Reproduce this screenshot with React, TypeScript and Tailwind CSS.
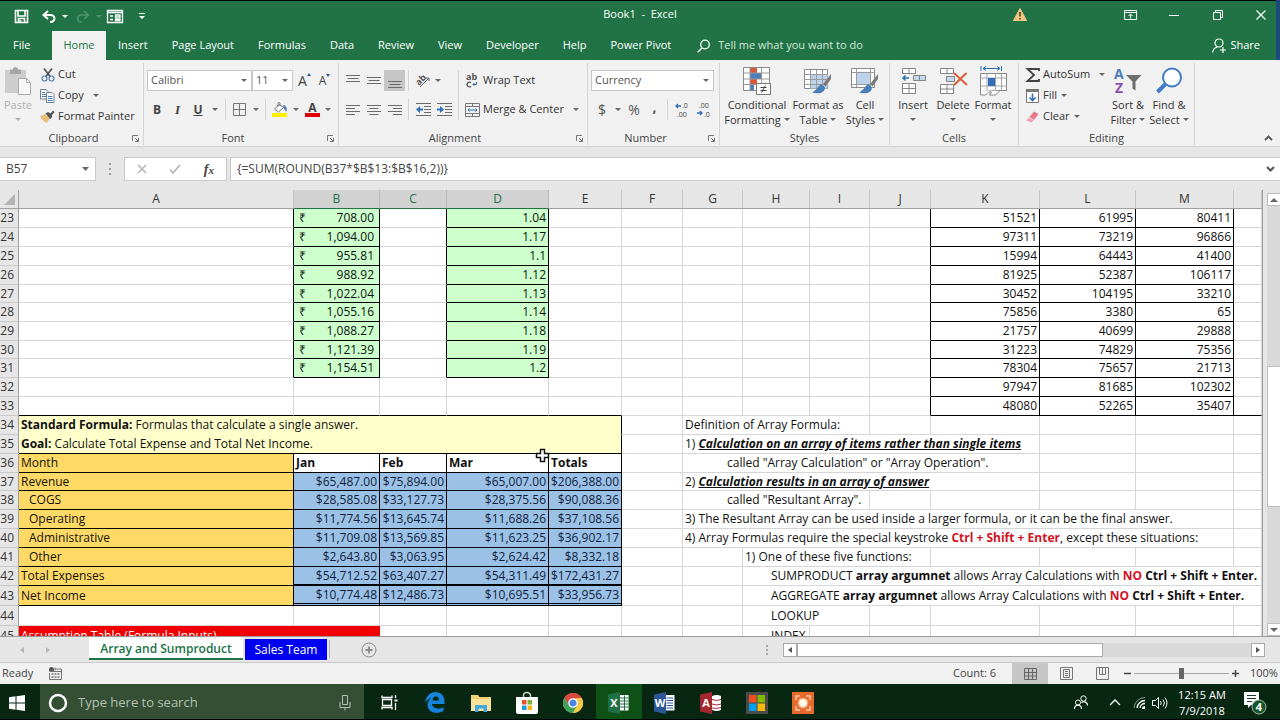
import type { ReactNode } from "react";
import { clsx } from "clsx";

const TABS = [
  "Insert",
  "Page Layout",
  "Formulas",
  "Data",
  "Review",
  "View",
  "Developer",
  "Help",
  "Power Pivot",
];

type Cell = {
  value?: ReactNode;
  className: string;
  span?: number;
};

type Row = {
  number: number;
  height: string;
  cells: Cell[];
};

const COLUMNS = [
  { name: "A", width: "w-[275px]" },
  { name: "B", width: "w-[86px]", selected: true },
  { name: "C", width: "w-[67px]", selected: true },
  { name: "D", width: "w-[102px]", selected: true },
  { name: "E", width: "w-[73px]" },
  { name: "F", width: "w-[61px]" },
  { name: "G", width: "w-[60px]" },
  { name: "H", width: "w-[67px]" },
  { name: "I", width: "w-[60px]" },
  { name: "J", width: "w-[61px]" },
  { name: "K", width: "w-[109px]" },
  { name: "L", width: "w-[96px]" },
  { name: "M", width: "w-[98px]" },
  { name: "", width: "w-auto" },
];

// border presets: right side / bottom side
const PLAIN = "border-[#d6d6d6]";
const RIGHT = "border-r-black border-b-[#d6d6d6]";
const BOTTOM = "border-r-[#d6d6d6] border-b-black";
const BOX = "border-black";

const GREEN = `${BOX} bg-[#ccffcc]`;
const GOLD = `${BOX} bg-[#ffd966]`;
const BLUE = `${BOX} bg-[#9bc2e6] text-right text-[#101c3c]`;
const YELLOW = "bg-[#ffffcc]";

const blank = (count: number, className = PLAIN): Cell[] =>
  Array.from({ length: count }, () => ({ className }));

const RATES: [string, string][] = [
  ["708.00", "1.04"],
  ["1,094.00", "1.17"],
  ["955.81", "1.1"],
  ["988.92", "1.12"],
  ["1,022.04", "1.13"],
  ["1,055.16", "1.14"],
  ["1,088.27", "1.18"],
  ["1,121.39", "1.19"],
  ["1,154.51", "1.2"],
];

const SAMPLES = [
  [51521, 61995, 80411],
  [97311, 73219, 96866],
  [15994, 64443, 41400],
  [81925, 52387, 106117],
  [30452, 104195, 33210],
  [75856, 3380, 65],
  [21757, 40699, 29888],
  [31223, 74829, 75356],
  [78304, 75657, 21713],
  [97947, 81685, 102302],
  [48080, 52265, 35407],
];

const UPPER_ROWS: Row[] = SAMPLES.map((sample, i) => {
  const rate = RATES[i];
  const last = i === SAMPLES.length - 1;
  const left: Cell[] = rate
    ? [
        { className: RIGHT },
        {
          className: GREEN,
          value: (
            <span className="flex justify-between px-[3px]">
              <span>₹</span>
              <span>{rate[0]}</span>
            </span>
          ),
        },
        { className: RIGHT },
        { className: `${GREEN} text-right`, value: rate[1] },
        { className: PLAIN },
      ]
    : blank(5, last ? BOTTOM : PLAIN);

  return {
    number: 23 + i,
    height: [4, 7].includes(i) ? "h-[18px]" : "h-[19px]",
    cells: [
      ...left,
      ...blank(4),
      { className: RIGHT },
      ...sample.map((n) => ({ className: `${BOX} text-right`, value: n })),
      { className: last ? BOTTOM : PLAIN },
    ],
  };
});

const MONEY: [string, string, string, string, string][] = [
  ["Revenue", "$65,487.00", "$75,894.00", "$65,007.00", "$206,388.00"],
  ["COGS", "$28,585.08", "$33,127.73", "$28,375.56", "$90,088.36"],
  ["Operating", "$11,774.56", "$13,645.74", "$11,688.26", "$37,108.56"],
  ["Administrative", "$11,709.08", "$13,569.85", "$11,623.25", "$36,902.17"],
  ["Other", "$2,643.80", "$3,063.95", "$2,624.42", "$8,332.18"],
  ["Total Expenses", "$54,712.52", "$63,407.27", "$54,311.49", "$172,431.27"],
  ["Net Income", "$10,774.48", "$12,486.73", "$10,695.51", "$33,956.73"],
];

const Red = ({ children }: { children: ReactNode }) => (
  <b className="text-[#d3121f]">{children}</b>
);

// everything right of column E in rows 37-43
const NOTES: Cell[][] = [
  [
    ...blank(1),
    {
      span: 5,
      className: PLAIN,
      value: (
        <>
          2) <b className="italic underline">Calculation results in an array of answer</b>
        </>
      ),
    },
    ...blank(3),
  ],
  [
    ...blank(1),
    { span: 3, className: PLAIN, value: <span className="pl-[42px]">called "Resultant Array".</span> },
    ...blank(5),
  ],
  [
    ...blank(1),
    {
      span: 7,
      className: PLAIN,
      value: "3) The Resultant Array can be used inside a larger formula, or it can be the final answer.",
    },
    ...blank(1),
  ],
  [
    ...blank(1),
    {
      span: 7,
      className: PLAIN,
      value: (
        <>
          4) Array Formulas require the special keystroke <Red>Ctrl + Shift + Enter</Red>, except these
          situations:
        </>
      ),
    },
    ...blank(1),
  ],
  [...blank(2), { span: 3, className: PLAIN, value: "1) One of these five functions:" }, ...blank(4)],
  [
    ...blank(2),
    {
      span: 7,
      className: PLAIN,
      value: (
        <span className="pl-[26px]">
          SUMPRODUCT <b>array argumnet</b> allows Array Calculations with <Red>NO</Red>{" "}
          <b>Ctrl + Shift + Enter.</b>
        </span>
      ),
    },
  ],
  [
    ...blank(2),
    {
      span: 7,
      className: PLAIN,
      value: (
        <span className="pl-[26px]">
          AGGREGATE <b>array argumnet</b> allows Array Calculations with <Red>NO</Red>{" "}
          <b>Ctrl + Shift + Enter.</b>
        </span>
      ),
    },
  ],
];

const MONEY_ROWS: Row[] = MONEY.map(([label, ...amounts], i) => ({
  number: 37 + i,
  height: i === 0 ? "h-[18px]" : i > 5 ? "h-[20px]" : "h-[19px]",
  cells: [
    {
      className: GOLD,
      value: <span className={i > 0 && i < 5 ? "pl-2" : undefined}>{label}</span>,
    },
    ...amounts.map((value) => ({
      className: clsx(BLUE, i === 5 && "border-b-2", i === 6 && "border-b-[3px] [border-bottom-style:double]"),
      value,
    })),
    ...NOTES[i],
  ],
}));

const ROWS: Row[] = [
  ...UPPER_ROWS,
  {
    number: 34,
    height: "h-[19px]",
    cells: [
      {
        span: 5,
        className: `${YELLOW} border-r-black border-b-[#ffffcc]`,
        value: (
          <>
            <b>Standard Formula:</b> Formulas that calculate a single answer.
          </>
        ),
      },
      ...blank(1),
      { span: 3, className: PLAIN, value: "Definition of Array Formula:" },
      ...blank(5),
    ],
  },
  {
    number: 35,
    height: "h-[19px]",
    cells: [
      {
        span: 5,
        className: `${YELLOW} ${BOX}`,
        value: (
          <>
            <b>Goal:</b> Calculate Total Expense and Total Net Income.
          </>
        ),
      },
      ...blank(1),
      {
        span: 5,
        className: PLAIN,
        value: (
          <>
            1) <b className="italic underline">Calculation on an array of items rather than single items</b>
          </>
        ),
      },
      ...blank(3),
    ],
  },
  {
    number: 36,
    height: "h-[19px]",
    cells: [
      { className: GOLD, value: "Month" },
      ...["Jan", "Feb", "Mar", "Totals"].map((value) => ({ className: `${BOX} font-bold`, value })),
      ...blank(1),
      {
        span: 5,
        className: PLAIN,
        value: <span className="pl-[42px]">called "Array Calculation" or "Array Operation".</span>,
      },
      ...blank(3),
    ],
  },
  ...MONEY_ROWS,
  {
    number: 44,
    height: "h-[20px]",
    cells: [
      ...blank(7),
      { span: 2, className: PLAIN, value: <span className="pl-[26px]">LOOKUP</span> },
      ...blank(5),
    ],
  },
  {
    number: 45,
    height: "h-[20px]",
    cells: [
      { span: 2, className: "border-[#f00000] bg-[#f00000] text-white", value: "Assumption Table (Formula Inputs)" },
      ...blank(5),
      { className: PLAIN, value: <span className="pl-[26px]">INDEX</span> },
      ...blank(6),
    ],
  },
];

function Caret({ className = "text-[#666]" }: { className?: string }) {
  return (
    <svg className={clsx("h-[3px] w-[6px] shrink-0", className)} viewBox="0 0 6 3" fill="currentColor">
      <path d="M0 0h6L3 3z" />
    </svg>
  );
}

function Svg({
  w,
  h,
  children,
  className,
}: {
  w: number;
  h: number;
  children: ReactNode;
  className?: string;
}) {
  return (
    <svg
      width={w}
      height={h}
      viewBox={`0 0 ${w} ${h}`}
      fill="none"
      stroke="currentColor"
      className={clsx("shrink-0 overflow-visible", className)}
      aria-hidden="true"
    >
      {children}
    </svg>
  );
}

function TitleBar() {
  return (
    <header className="flex h-[31px] shrink-0 items-center border-t border-black bg-[#217346] text-white">
      <div className="flex flex-1 items-center pl-[14px]">
        <button aria-label="Save" className="mr-[13px]">
          <Svg w={15} h={15}>
            <path d="M1.5 1.5h12v12h-12zM4 1.5V7h7V1.5M4.500 13.500v-4h6v4M6.500 13v-2" strokeWidth="1.600" />
          </Svg>
        </button>
        <button aria-label="Undo" className="flex items-center gap-[6px]">
          <Svg w={14} h={13}>
            <path d="M6 1 1.500 5 6 9M2 5h6.500a4 3.500 0 0 1 0 7H8" strokeWidth="2" />
          </Svg>
          <Caret className="text-white" />
        </button>
        <button aria-label="Redo" className="ml-[8px] flex items-center gap-[6px] text-[#4f9470]">
          <Svg w={14} h={13}>
            <path d="M8 1l4.500 4L8 9M12 5H5.500a4 3.500 0 0 0 0 7H6" strokeWidth="1.500" />
          </Svg>
          <Caret className="text-[#4f9470]" />
        </button>
        <button aria-label="Form" className="ml-[5px]">
          <Svg w={16} h={13}>
            <path d="M.500.500h15v12H.500zM.500 2.500h15M3 6h3M3 9.500h3M8.500 5h4.500v2H8.500zM8.500 9h4.500v1.500H8.500z" strokeWidth="1.300" />
          </Svg>
        </button>
        <button aria-label="Customize Quick Access Toolbar" className="ml-[16px]">
          <Svg w={6} h={7}>
            <path d="M0 .500h6" />
            <path d="M0 3h6L3 6z" fill="currentColor" stroke="none" />
          </Svg>
        </button>
      </div>
      <h1 className="pb-[3px] text-[11px] whitespace-pre">Book1  -  Excel</h1>
      <div className="flex flex-1 items-center justify-end pr-[10px] pb-[3px]">
        <Svg w={14} h={13} className="mr-[97px]">
          <path d="M7 .500 13.500 12.500H.500z" fill="#f3c782" stroke="#f3c782" />
          <path d="M7 4v4.500M7 10v1.500" stroke="#4a3210" strokeWidth="1.500" />
        </Svg>
        <button aria-label="Ribbon Display Options" className="mr-[32px]">
          <Svg w={13} h={10}>
            <path d="M.500.500h12v9H.500zM.500 2.500h12M6.500 8.500v-4M4.500 6l2-2 2 2" />
          </Svg>
        </button>
        <button aria-label="Minimize" className="mr-[34px]">
          <Svg w={10} h={10}>
            <path d="M0 5.500h10" />
          </Svg>
        </button>
        <button aria-label="Restore Down" className="mr-[33px]">
          <Svg w={10} h={10}>
            <path d="M.500 2.500h7v7h-7zM2.500 2.500v-2h7v7h-2" />
          </Svg>
        </button>
        <button aria-label="Close">
          <Svg w={10} h={10}>
            <path d="M.500.500l9 9M9.500.500l-9 9" strokeWidth="1.200" />
          </Svg>
        </button>
      </div>
    </header>
  );
}

function TabStrip() {
  return (
    <nav className="flex h-[29px] shrink-0 items-center bg-[#217346] text-[11px] text-white">
      <button className="w-[52px] pl-[13px] text-left">File</button>
      <button className="h-[29px] w-[54px] bg-[#f1f1f1] text-[#217346]">Home</button>
      {TABS.map((tab) => (
        <button key={tab} className="px-[12px]">
          {tab}
        </button>
      ))}
      <label className="ml-[14px] flex flex-1 items-center gap-[8px]">
        <Svg w={13} h={14}>
          <circle cx="8" cy="5.500" r="4.300" strokeWidth="1.300" />
          <path d="M5 9 .700 13.300" strokeWidth="1.300" />
        </Svg>
        <input
          aria-label="Tell me what you want to do"
          placeholder="Tell me what you want to do"
          className="w-[180px] bg-transparent outline-none placeholder:text-[#d5e8dc]"
        />
      </label>
      <button className="mr-[16px] flex items-center gap-[4px]">
        <Svg w={14} h={15}>
          <circle cx="7" cy="5" r="4" strokeWidth="1.200" />
          <path d="M.700 14.500C1 11.500 3 9.500 5.500 9M11 9v6M8 12h6" strokeWidth="1.200" />
        </Svg>
        Share
      </button>
    </nav>
  );
}

function Group({
  label,
  width,
  launcher,
  labelClass,
  children,
}: {
  label: string;
  width: string;
  launcher?: boolean;
  labelClass?: string;
  children: ReactNode;
}) {
  return (
    <section className={clsx("flex shrink-0 flex-col border-r border-[#d4d4d4]", width)}>
      <div className="flex flex-1">{children}</div>
      <div className="flex h-[14px] items-center text-[11px] leading-[14px] text-[#444]">
        <span className={clsx("flex-1 text-center", labelClass)}>{label}</span>
        {launcher ? (
          <button aria-label={`${label} settings`} className="flex w-[16px] justify-center text-[#777]">
            <Svg w={7} h={7}>
              <path d="M.500 6V.500H6M3 3l3 3M6.500 3v3.500H3" />
            </Svg>
          </button>
        ) : null}
      </div>
    </section>
  );
}

const Divider = ({ className = "h-[21px]" }: { className?: string }) => (
  <span className={clsx("mx-[3px] w-px shrink-0 bg-[#d4d4d4]", className)} />
);

function SmallButton({ icon, label, caret }: { icon: ReactNode; label: string; caret?: string }) {
  return (
    <button className="flex h-[21px] items-center text-[11px] whitespace-nowrap text-[#333]">
      <span className="mr-[3px] flex w-[15px] justify-center">{icon}</span>
      {label}
      {caret ? (
        <span className={caret}>
          <Caret />
        </span>
      ) : null}
    </button>
  );
}

function BigButton({
  icon,
  lines,
  width,
  disabled,
}: {
  icon: ReactNode;
  lines: [string, string];
  width: string;
  disabled?: boolean;
}) {
  return (
    <button
      disabled={disabled}
      className={clsx(
        "flex shrink-0 flex-col items-center pt-[3px] text-[11px] leading-[15px] whitespace-nowrap",
        disabled ? "text-[#b1b1b1]" : "text-[#333]",
        width,
      )}
    >
      <span className="mb-px flex h-[30px] items-center justify-center">{icon}</span>
      <span>{lines[0]}</span>
      <span className="flex h-[15px] items-center gap-[3px]">
        {lines[1]}
        <Caret className={disabled ? "text-[#b1b1b1]" : "text-[#666]"} />
      </span>
    </button>
  );
}

function Lines({ d }: { d: string }) {
  return (
    <Svg w={14} h={14} className="text-[#6b6b6b]">
      <path d={d} />
    </Svg>
  );
}

function Combo({ label, value, width }: { label: string; value: string; width: string }) {
  return (
    <span className={clsx("relative h-[21px] border border-[#c6c6c6] bg-white", width)}>
      <select
        aria-label={label}
        defaultValue={value}
        className="h-full w-full appearance-none bg-transparent pl-[3px] text-[11px] text-[#555] outline-none"
      >
        <option>{value}</option>
      </select>
      <span className="pointer-events-none absolute top-[8px] right-[4px] flex">
        <Caret />
      </span>
    </span>
  );
}

const Brush = () => (
  <>
    <path d="M28 7 20 17l2.500 2.500L28 12z" fill="#7b7b7b" stroke="none" />
    <path d="M19 17.500c-4 0-4 5-10 8 7 2 13 0 13-5z" fill="#4a7ebb" stroke="none" />
  </>
);

function Ribbon() {
  return (
    <div className="flex h-[87px] shrink-0 border-b border-[#d0d0d0] bg-[#f1f1f1] pt-[3px] pb-px">
      <Group label="Clipboard" width="w-[144px]" labelClass="pl-[20px]" launcher>
        <BigButton
          width="w-[36px]"
          disabled
          lines={["Paste", ""]}
          icon={
            <Svg w={28} h={28}>
              <path d="M1 3h21v23H1z" fill="#cdcdcd" stroke="none" />
              <path d="M6 2.500h3a2.500 2.500 0 0 1 5 0h3V7H6z" fill="#a5a5a5" stroke="none" />
              <path d="M14.500 11.500h8l4 4v12h-12z" fill="#f7f7f7" stroke="#ababab" />
              <path d="M22.500 11.500v4h4" stroke="#ababab" />
            </Svg>
          }
        />
        <div className="flex flex-col items-start pt-px pl-[4px]">
          <SmallButton
            label="Cut"
            icon={
              <Svg w={14} h={14}>
                <path d="M3 .500 9.500 9M11 .500 4.500 9" stroke="#555" strokeWidth="1.800" />
                <circle cx="3.500" cy="10.500" r="2.500" stroke="#4a7ebb" strokeWidth="1.200" />
                <circle cx="10.500" cy="10.500" r="2.500" stroke="#4a7ebb" strokeWidth="1.200" />
              </Svg>
            }
          />
          <SmallButton
            label="Copy"
            caret="ml-[9px]"
            icon={
              <Svg w={15} h={14}>
                <path d="M.500.500H6l2 2v7.500H.500z" fill="#fff" stroke="#6f7f92" />
                <path d="M2 3.500h3M2 5.500h4M2 7.500h4" stroke="#4a7ebb" />
                <path d="M6.500 3.500H12l2 2v8H6.500z" fill="#fff" stroke="#6f7f92" />
                <path d="M8 7.500h4.500M8 9.500h4.500M8 11.500h4.500" stroke="#4a7ebb" />
              </Svg>
            }
          />
          <SmallButton
            label="Format Painter"
            icon={
              <Svg w={15} h={13}>
                <path d="M0 6.500 5 4l5 4.500L6.500 13C3 11 1.500 9 0 6.500z" fill="#ebbf77" stroke="none" />
                <path d="M5.500 3.500 8 2l2.500 1.500L13 .500l1.500 1.500-2.500 3L12 7.500l-2 1.500z" fill="#555" stroke="none" />
              </Svg>
            }
          />
        </div>
      </Group>

      <Group label="Font" width="w-[195px]" launcher>
        <div className="flex flex-col gap-[8px] pt-[7px] pl-[3px]">
          <div className="flex h-[21px] items-center">
            <Combo label="Font" value="Calibri" width="w-[105px]" />
            <Combo label="Font size" value="11" width="w-[41px]" />
            <button aria-label="Increase Font Size" className="ml-[5px] flex text-[14px] leading-[16px] text-[#444]">
              A
              <Svg w={4} h={3}>
                <path d="M0 3h4L2 0z" fill="#2b579a" stroke="none" />
              </Svg>
            </button>
            <button aria-label="Decrease Font Size" className="ml-[8px] flex text-[12px] leading-[14px] text-[#444]">
              A
              <Svg w={4} h={3}>
                <path d="M0 0h4L2 3z" fill="#2b579a" stroke="none" />
              </Svg>
            </button>
          </div>
          <div className="flex h-[21px] items-center text-[12px] text-[#444]">
            <button className="w-[20px] font-bold">B</button>
            <button className="w-[21px] font-['Liberation_Serif',serif] text-[13px] font-bold italic">I</button>
            <button className="w-[20px] font-bold underline">U</button>
            <button aria-label="Underline style" className="flex w-[14px] justify-center">
              <Caret />
            </button>
            <Divider />
            <button aria-label="Borders" className="flex w-[21px] justify-center">
              <Svg w={13} h={13} className="text-[#777]">
                <path d="M.500.500h12v12H.500zM6.500.500v12M.500 6.500h12" />
              </Svg>
            </button>
            <button aria-label="Border style" className="flex w-[12px] justify-center">
              <Caret />
            </button>
            <Divider />
            <button aria-label="Fill Color" className="flex w-[21px] justify-center">
              <Svg w={15} h={15}>
                <path d="M7 2.500 2.500 7l4 3 5-4.500z" fill="#fff" stroke="#777" />
                <path d="M6 5V1.500a1 1 0 0 1 2 0V4" stroke="#777" />
                <path d="M11 3c3 0 4.500 3 3.500 6.500C13 9 12 7 11.500 5z" fill="#4a7ebb" stroke="none" />
                <path d="M0 11h15v4H0z" fill="#ffef00" stroke="none" />
              </Svg>
            </button>
            <button aria-label="Fill color options" className="flex w-[12px] justify-center">
              <Caret />
            </button>
            <button aria-label="Font Color" className="flex w-[21px] flex-col items-center text-[12px] leading-[11px] font-bold">
              A
              <span className="h-[4px] w-[15px] bg-[#e00000]" />
            </button>
            <button aria-label="Font color options" className="flex w-[10px] justify-center">
              <Caret />
            </button>
          </div>
        </div>
      </Group>

      <Group label="Alignment" width="w-[249px]" launcher>
        <div className="flex pt-[7px] pl-[3px]">
          <div className="flex flex-col gap-[8px]">
            <div className="flex h-[21px] items-center">
              <button aria-label="Top Align" className="flex h-[21px] w-[21px] items-center justify-center">
                <Lines d="M0 1.500h14M1.500 4.500h11M0 7.500h14" />
              </button>
              <button aria-label="Middle Align" className="flex h-[21px] w-[21px] items-center justify-center">
                <Lines d="M0 3.500h14M1.500 6.500h11M0 9.500h14" />
              </button>
              <button aria-label="Bottom Align" className="flex h-[21px] w-[21px] items-center justify-center bg-[#c6c6c6]">
                <Lines d="M0 7.500h14M1.500 10.500h11M0 13.500h14" />
              </button>
              <Divider />
              <button aria-label="Orientation" className="flex items-center gap-[4px] pl-[3px]">
                <Svg w={16} h={15}>
                  <text x="1" y="10" fontSize="9" fontWeight="bold" fill="#555" stroke="none" transform="rotate(-45 6 8)">
                    ab
                  </text>
                  <path d="M5 14 14 5M14 8V5h-3" stroke="#666" />
                </Svg>
                <Caret />
              </button>
            </div>
            <div className="flex h-[21px] items-center">
              <button aria-label="Align Left" className="flex w-[21px] justify-center">
                <Lines d="M0 2.500h14M0 5.500h9M0 8.500h14M0 11.500h9" />
              </button>
              <button aria-label="Center" className="flex w-[21px] justify-center">
                <Lines d="M0 2.500h14M2.500 5.500h9M0 8.500h14M2.500 11.500h9" />
              </button>
              <button aria-label="Align Right" className="flex w-[21px] justify-center">
                <Lines d="M0 2.500h14M5 5.500h9M0 8.500h14M5 11.500h9" />
              </button>
              <Divider />
              <button aria-label="Decrease Indent" className="flex w-[22px] justify-center">
                <Svg w={15} h={13}>
                  <path d="M0 .500h15M8 3.500h7M8 6.500h7M8 9.500h7M0 12.500h15" stroke="#6b6b6b" />
                  <path d="M0 6.500 4 3v2.500h3v2H4V10z" fill="#2f6fb7" stroke="none" />
                </Svg>
              </button>
              <button aria-label="Increase Indent" className="flex w-[21px] justify-center">
                <Svg w={15} h={13}>
                  <path d="M0 .500h15M8 3.500h7M8 6.500h7M8 9.500h7M0 12.500h15" stroke="#6b6b6b" />
                  <path d="M7 6.500 3 3v2.500H0v2h3V10z" fill="#2f6fb7" stroke="none" />
                </Svg>
              </button>
            </div>
          </div>
          <Divider className="h-[50px]" />
          <div className="flex flex-col gap-[8px] pl-[3px]">
            <SmallButton
              label="Wrap Text"
              icon={
                <Svg w={13} h={15}>
                  <text x="0" y="7" fontSize="9" fontWeight="bold" fill="#555" stroke="none">
                    ab
                  </text>
                  <path d="M5 9.800a2.300 2.300 0 1 0 0 3.400" stroke="#555" strokeWidth="1.300" />
                  <path d="M10.500 9v2.500H7M8.500 10 7 11.500 8.500 13" stroke="#2f6fb7" />
                </Svg>
              }
            />
            <SmallButton
              label="Merge & Center"
              caret="ml-[9px]"
              icon={
                <Svg w={15} h={14}>
                  <path d="M.500.500h14v13H.500zM.500 3.500h14M.500 10.500h14M7.500.500v3M7.500 10.500v3" stroke="#777" />
                  <path d="M3 7h9M4.500 5.500 3 7l1.500 1.500M10.500 5.500 12 7l-1.500 1.500" stroke="#2f6fb7" />
                </Svg>
              }
            />
          </div>
        </div>
      </Group>

      <Group label="Number" width="w-[132px]" launcher>
        <div className="flex flex-1 flex-col gap-[8px] pt-[7px] pl-[3px]">
          <div className="flex h-[21px]">
            <Combo label="Number Format" value="Currency" width="w-[123px]" />
          </div>
          <div className="flex h-[21px] items-center text-[14px] text-[#555]">
            <button className="w-[22px]">$</button>
            <button aria-label="Accounting format options" className="flex w-[10px] justify-center">
              <Caret />
            </button>
            <button className="w-[22px]">%</button>
            <button className="mb-[6px] w-[19px] font-bold">,</button>
            <Divider />
            <button aria-label="Increase Decimal" className="flex w-[22px] justify-center">
              <Svg w={15} h={15}>
                <text x="7" y="6" fontSize="7" fill="#444" stroke="none">.0</text>
                <text x="2" y="15" fontSize="7" fill="#444" stroke="none">.00</text>
                <path d="M6 4H1M3 2 1 4l2 2" stroke="#2f6fb7" strokeWidth="1.300" />
              </Svg>
            </button>
            <button aria-label="Decrease Decimal" className="flex w-[22px] justify-center">
              <Svg w={15} h={15}>
                <text x="2" y="6" fontSize="7" fill="#444" stroke="none">.00</text>
                <text x="7" y="15" fontSize="7" fill="#444" stroke="none">.0</text>
                <path d="M0 11h5M3 9l2 2-2 2" stroke="#2f6fb7" strokeWidth="1.300" />
              </Svg>
            </button>
          </div>
        </div>
      </Group>

      <Group label="Styles" width="w-[170px]">
        <div className="flex pl-[4px]">
          <BigButton
            width="w-[66px]"
            lines={["Conditional", "Formatting"]}
            icon={
              <Svg w={28} h={28}>
                <path d="M.500.500h26v23H.500z" fill="#fff" stroke="#8a8a8a" />
                <path d="M7 1h7v5H7zM7 12h7v5H7z" fill="#d8573a" stroke="none" />
                <path d="M7 6h11v6H7zM7 17h4v6H7z" fill="#4a7ebb" stroke="none" />
                <path d="M.500 6h26M.500 12h26M.500 17.500h26M7 .500v23M18.500.500v23" stroke="#9a9a9a" />
                <path d="M13.500 16.500h14v11h-14z" fill="#fff" stroke="#777" />
                <path d="M17.500 20.500h6M17.500 23.500h6M22.500 18.500l-4 7" stroke="#444" />
              </Svg>
            }
          />
          <BigButton
            width="w-[56px]"
            lines={["Format as", "Table"]}
            icon={
              <Svg w={30} h={28}>
                <path d="M1.500 2.500h23v19h-23z" fill="#fff" stroke="#8a8a8a" />
                <path d="M7 7h17.500v14.500H7z" fill="#bdd3ec" stroke="none" />
                <path d="M1.500 7.500h23M1.500 12.500h23M1.500 17.500h23M7.500 2.500v19M13.500 2.500v19M19.500 2.500v19" stroke="#9a9a9a" />
                <Brush />
              </Svg>
            }
          />
          <BigButton
            width="w-[38px]"
            lines={["Cell", "Styles"]}
            icon={
              <Svg w={30} h={28}>
                <path d="M1.500 1.500h23v19h-23z" fill="#fff" stroke="#8a8a8a" />
                <path d="M1.500 5.500h23M1.500 17.500h23M6.500 1.500v19M20.500 1.500v19" stroke="#9a9a9a" />
                <path d="M7 6h13v11H7z" fill="#bdd3ec" stroke="none" />
                <Brush />
              </Svg>
            }
          />
        </div>
      </Group>

      <Group label="Cells" width="w-[129px]">
        <div className="flex pl-[3px]">
          <BigButton
            width="w-[40px]"
            lines={["Insert", ""]}
            icon={
              <Svg w={26} h={28}>
                <path d="M2.500 1.500h13v5h-13zM9 1.500v5M2.500 16.500h13v10h-13zM9 16.500v10M2.500 21.500h13" fill="#fff" stroke="#858585" />
                <path d="M13.500 8.500h12v5h-12zM19.500 8.500v5" fill="#c5d9ee" stroke="#858585" />
                <path d="M9 11H3M5.500 8.500 3 11l2.500 2.500" stroke="#2f6fb7" strokeWidth="1.500" />
              </Svg>
            }
          />
          <BigButton
            width="w-[40px]"
            lines={["Delete", ""]}
            icon={
              <Svg w={28} h={28}>
                <path d="M1.500 1.500h13v5h-13zM8 1.500v5M1.500 17.500h13v9h-13zM8 17.500v9M1.500 22h13" fill="#fff" stroke="#858585" />
                <path d="M7.500 9.500h8v5h-8z" fill="#c5d9ee" stroke="#858585" />
                <path d="M15 6l13 12M27.500 6 15 18" stroke="#dd5b3b" strokeWidth="2" />
              </Svg>
            }
          />
          <BigButton
            width="w-[40px]"
            lines={["Format", ""]}
            icon={
              <Svg w={27} h={30}>
                <path d="M1 0v5M21.500 0v5M3 2.500h17M6 .500l-3 2 3 2M17 .500l3 2-3 2" stroke="#2f6fb7" />
                <path d="M.500 7.500h26v17h-26z" fill="#fff" stroke="#858585" />
                <path d="M.500 12h26M.500 20h26M7 7.500v17M15.500 7.500v17M21.500 7.500v17" stroke="#a5a5a5" />
                <path d="M8 12h7v8H8z" fill="#2f6fb7" stroke="none" />
                <path d="M.500 24v5h5l3-3h3l-2 3h6l4-4" fill="#fff" stroke="#858585" />
              </Svg>
            }
          />
        </div>
      </Group>

      <Group label="Editing" width="w-[176px]">
        <div className="flex w-[87px] flex-col items-start pt-px pl-[6px]">
          <SmallButton
            label="AutoSum"
            caret="ml-[9px]"
            icon={
              <Svg w={14} h={14}>
                <path d="M13 3V1H1.500L8 7l-6.500 6H13v-2" stroke="#444" strokeWidth="1.800" />
              </Svg>
            }
          />
          <SmallButton
            label="Fill"
            caret="ml-[4px]"
            icon={
              <Svg w={13} h={14}>
                <path d="M.500.500h12v13H.500z" fill="#fff" stroke="#777" />
                <path d="M0 0h13v3H0z" fill="#777" stroke="none" />
                <path d="M6.500 4.500v7M3.500 8.500l3 3 3-3" stroke="#2f6fb7" strokeWidth="1.600" />
              </Svg>
            }
          />
          <SmallButton
            label="Clear"
            caret="ml-[4px]"
            icon={
              <Svg w={13} h={12}>
                <path d="M8 .500 12.500 3 8 9 3.500 6z" fill="#e8788c" stroke="none" />
                <path d="M3 6.500 7.500 9.500 5.500 11.500.500 9.500z" fill="#f0a0ae" stroke="none" />
              </Svg>
            }
          />
        </div>
        <BigButton
          width="w-[44px]"
          lines={["Sort &", "Filter"]}
          icon={
            <Svg w={28} h={28}>
              <text x="0" y="12" fontSize="14" fontWeight="bold" fill="#4a7ebb" stroke="none">A</text>
              <text x="1" y="26" fontSize="14" fontWeight="bold" fill="#8e4fb0" stroke="none">Z</text>
              <path d="M12 8h15.500l-6 6.500v9l-3-2v-7z" fill="#6d6d6d" stroke="none" />
            </Svg>
          }
        />
        <BigButton
          width="w-[38px]"
          lines={["Find &", "Select"]}
          icon={
            <Svg w={28} h={28}>
              <circle cx="17" cy="10.500" r="9" fill="#fff" stroke="#3f7cc4" strokeWidth="2" />
              <path d="M10.500 17 2.500 25" stroke="#3f7cc4" strokeWidth="4" />
            </Svg>
          }
        />
      </Group>
      <div className="flex flex-1 items-end justify-end pr-[7px] pb-[4px]">
        <button aria-label="Collapse the Ribbon" className="text-[#555]">
          <Svg w={9} h={6}>
            <path d="M1 5l3.500-3.500L8 5" strokeWidth="1.800" />
          </Svg>
        </button>
      </div>
    </div>
  );
}

function FormulaBar() {
  return (
    <div className="flex h-[43px] shrink-0 items-start bg-[#e6e6e6] pt-[10px] text-[#444]">
      <div className="flex h-[24px] w-[96px] items-center border border-l-0 border-[#c9c9c9] bg-white pr-[6px]">
        <input
          aria-label="Name Box"
          defaultValue="B57"
          className="min-w-0 flex-1 bg-transparent pl-[6px] text-[12px] outline-none"
        />
        <svg width="7" height="4" viewBox="0 0 7 4" fill="#666">
          <path d="M0 0h7L3.500 4z" />
        </svg>
      </div>
      <span className="flex h-[24px] w-[28px] items-center justify-center">
        <Svg w={2} h={12} className="text-[#9a9a9a]">
          <path d="M1 0v2M1 5v2M1 10v2" strokeWidth="2" />
        </Svg>
      </span>
      <div className="flex h-[24px] w-[103px] items-center justify-between border border-[#c9c9c9] bg-white px-[12px]">
        <button aria-label="Cancel" className="text-[#b5b5b5]">
          <Svg w={10} h={10}>
            <path d="M1 1l8 8M9 1 1 9" strokeWidth="1.500" />
          </Svg>
        </button>
        <button aria-label="Enter" className="text-[#b5b5b5]">
          <Svg w={12} h={10}>
            <path d="M1 5.500 4 9l7-8" strokeWidth="1.800" />
          </Svg>
        </button>
        <button aria-label="Insert Function" className="font-['Liberation_Serif',serif] text-[14px] font-bold italic">
          f<span className="text-[11px]">x</span>
        </button>
      </div>
      <div className="ml-[3px] flex h-[24px] flex-1 items-center border border-r-0 border-[#c9c9c9] bg-white pr-[5px]">
        <input
          aria-label="Formula Bar"
          defaultValue="{=SUM(ROUND(B37*$B$13:$B$16,2))}"
          className="flex-1 bg-transparent pl-[6px] text-[12px] outline-none"
        />
        <button aria-label="Expand Formula Bar" className="text-[#555]">
          <Svg w={9} h={6}>
            <path d="M1 1l3.500 3.500L8 1" strokeWidth="2" />
          </Svg>
        </button>
      </div>
    </div>
  );
}

function Sheet() {
  return (
    <main className="flex min-h-0 flex-1 overflow-hidden border-b border-[#9a9a9a]">
      <div className="relative min-w-0 flex-1 overflow-hidden">
        <table className="w-full table-fixed border-separate border-spacing-0 bg-white text-[12px] leading-[16px] text-[#111]">
          <colgroup>
            <col className="w-[19px]" />
            {COLUMNS.map((column) => (
              <col key={column.name} className={column.width} />
            ))}
          </colgroup>
          <thead>
            <tr className="h-[19px]">
              <th className="border-r border-b border-[#9f9f9f] bg-[#e6e6e6] p-0">
                <svg width="11" height="11" viewBox="0 0 11 11" className="ml-[4px]" fill="#b4b4b4">
                  <path d="M11 0v11H0z" />
                </svg>
              </th>
              {COLUMNS.map((column) => (
                <th
                  key={column.name}
                  scope="col"
                  className={clsx(
                    "border-r border-b p-0 font-normal",
                    column.selected
                      ? "border-r-[#b8b8b8] border-b-[#217346] bg-[#d2d2d2] text-[#217346]"
                      : "border-r-[#c4c4c4] border-b-[#9f9f9f] bg-[#e6e6e6] text-[#333]",
                  )}
                >
                  {column.name}
                </th>
              ))}
            </tr>
          </thead>
          <tbody>
            {ROWS.map((row) => (
              <tr key={row.number} className={row.height}>
                <th
                  scope="row"
                  className="border-r border-b border-r-[#9f9f9f] border-b-[#c9c9c9] bg-[#e6e6e6] p-0 pr-[4px] text-right font-normal text-[#333]"
                >
                  {row.number}
                </th>
                {row.cells.map((cell, i) => (
                  <td
                    key={i}
                    colSpan={cell.span}
                    className={clsx("border-r border-b px-[2px] py-0 whitespace-nowrap", cell.className)}
                  >
                    {cell.value}
                  </td>
                ))}
              </tr>
            ))}
          </tbody>
        </table>
        {/* mouse pointer */}
        <Svg w={15} h={15} className="absolute top-[258px] left-[535px]">
          <path d="M5.500 1.500h4v4h4v4h-4v4h-4v-4h-4v-4h4z" fill="#fff" stroke="#111" strokeWidth="1.500" />
        </Svg>
      </div>
      <div className="flex w-[18px] shrink-0 flex-col border-l border-[#9f9f9f] bg-[#e6e6e6] pl-[4px]">
        <button aria-label="Scroll up" className="mt-[3px] flex h-[13px] items-center justify-center border border-r-0 border-[#bdbdbd] bg-white">
          <Svg w={8} h={4}>
            <path d="M0 4h8L4 0z" fill="#666" stroke="none" />
          </Svg>
        </button>
        <div className="flex flex-1 flex-col bg-[#d9d9d9]">
          <span className="h-[160px]" />
          <span className="h-[141px] border border-r-0 border-[#bdbdbd] bg-white" />
        </div>
        <button aria-label="Scroll down" className="flex h-[13px] items-center justify-center border border-r-0 border-[#bdbdbd] bg-white">
          <Svg w={8} h={4}>
            <path d="M0 0h8L4 4z" fill="#666" stroke="none" />
          </Svg>
        </button>
      </div>
    </main>
  );
}

function SheetTabs() {
  return (
    <div className="flex h-[26px] shrink-0 items-start border-b border-[#c9c9c9] bg-[#e6e6e6] text-[12px]">
      <div className="flex h-[25px] w-[89px] items-center gap-[22px] pl-[20px] text-[#b5b5b5]">
        <button aria-label="Previous sheet">
          <Svg w={4} h={6}>
            <path d="M4 0v6L0 3z" fill="currentColor" stroke="none" />
          </Svg>
        </button>
        <button aria-label="Next sheet">
          <Svg w={4} h={6}>
            <path d="M0 0v6l4-3z" fill="currentColor" stroke="none" />
          </Svg>
        </button>
      </div>
      <button className="h-[23px] w-[154px] border-b-2 border-[#217346] bg-white pt-[2px] font-semibold text-[#217346]">
        Array and Sumproduct
      </button>
      <button className="mt-[2px] ml-[2px] h-[21px] w-[82px] bg-[#0000f0] text-white">Sales Team</button>
      <span className="mt-[3px] ml-[2px] h-[18px] w-px bg-[#b5b5b5]" />
      <button aria-label="New sheet" className="mt-[5px] ml-[31px] text-[#888]">
        <Svg w={16} h={16}>
          <circle cx="8" cy="8" r="7" />
          <path d="M4.500 8h7M8 4.500v7" strokeWidth="1.800" />
        </Svg>
      </button>
      <div className="flex h-[25px] flex-1 items-center justify-end pr-[15px]">
        <Svg w={2} h={10} className="mr-[15px] text-[#a5a5a5]">
          <path d="M1 0v2M1 4v2M1 8v2" strokeWidth="2" />
        </Svg>
        <div className="flex h-[14px] w-[482px] bg-[#d9d9d9]">
          <button aria-label="Scroll left" className="flex w-[14px] items-center justify-center border border-[#ababab] bg-white">
            <Svg w={4} h={6}>
              <path d="M4 0v6L0 3z" fill="#555" stroke="none" />
            </Svg>
          </button>
          <span className="w-[306px] border border-[#ababab] bg-white" />
          <span className="flex-1" />
          <button aria-label="Scroll right" className="flex w-[14px] items-center justify-center border border-[#ababab] bg-white">
            <Svg w={4} h={6}>
              <path d="M0 0v6l4-3z" fill="#555" stroke="none" />
            </Svg>
          </button>
        </div>
      </div>
    </div>
  );
}

function StatusBar() {
  return (
    <div className="flex h-[21px] shrink-0 items-center bg-[#f1f1f1] text-[11px] text-[#444]">
      <span className="w-[49px] pl-[2px]">Ready</span>
      <Svg w={13} h={13} className="text-[#777]">
        <circle cx="2.500" cy="2.500" r="2.500" fill="#555" stroke="none" />
        <path d="M6 2h6.500v10.500H.500V6M6 .500v3M.500 4.500h12" />
        <path d="M2.500 7h8M2.500 10h8" strokeDasharray="2 1" strokeWidth="1.500" />
      </Svg>
      <span className="ml-auto">Count: 6</span>
      <button aria-label="Normal" className="ml-[16px] flex h-[21px] w-[36px] items-center justify-center bg-[#c6c6c6] text-[#666]">
        <Svg w={13} h={12}>
          <path d="M.500.500h12v11H.500zM4.500.500v11M8.500.500v11M.500 4.500h12M.500 8h12" />
        </Svg>
      </button>
      <button aria-label="Page Layout view" className="flex w-[36px] justify-center text-[#777]">
        <Svg w={13} h={13}>
          <path d="M.500.500h12v12H.500zM3.500 2.500h6v8h-6zM5 4.500h3M5 6.500h3M5 8.500h3" />
        </Svg>
      </button>
      <button aria-label="Page Break Preview" className="flex w-[36px] justify-center text-[#777]">
        <Svg w={13} h={13}>
          <path d="M.500.500h12v12H.500zM3.500.500v7h6v-7M6.500.500v7" />
        </Svg>
      </button>
      <button aria-label="Zoom out" className="ml-[4px] text-[#444]">
        <Svg w={7} h={7}>
          <path d="M0 3.500h7" strokeWidth="1.500" />
        </Svg>
      </button>
      <input
        aria-label="Zoom"
        type="range"
        defaultValue={50}
        className="mx-[3px] h-[11px] w-[95px] appearance-none bg-[linear-gradient(#a5a5a5,#a5a5a5)] bg-[length:100%_1px] bg-center bg-no-repeat [&::-webkit-slider-thumb]:h-[11px] [&::-webkit-slider-thumb]:w-[5px] [&::-webkit-slider-thumb]:appearance-none [&::-webkit-slider-thumb]:bg-[#666]"
      />
      <button aria-label="Zoom in" className="text-[#444]">
        <Svg w={7} h={7}>
          <path d="M0 3.500h7M3.500 0v7" strokeWidth="1.500" />
        </Svg>
      </button>
      <span className="ml-[11px] w-[30px]">100%</span>
    </div>
  );
}

const OfficeIcon = ({ color, letter, children }: { color: string; letter: string; children: ReactNode }) => (
  <Svg w={22} h={22}>
    {children}
    <path d="M0 2.500 12 0v22L0 19.500z" fill={color} stroke="none" />
    <text x="6" y="15" textAnchor="middle" fontSize="11" fontWeight="bold" fill="#fff" stroke="none">
      {letter}
    </text>
  </Svg>
);

const APPS: { name: string; active?: boolean; icon: ReactNode }[] = [
  {
    name: "Task View",
    icon: (
      <Svg w={17} h={15} className="text-white">
        <path d="M1 .500v2h10v-2M1.500 4.500h9v6h-9zM1 14.500v-2h10v2M14.500 0v3M14.500 8v7" strokeWidth="1.300" />
        <path d="M13.500 4.500h3v2h-3z" fill="#fff" stroke="none" />
      </Svg>
    ),
  },
  {
    name: "Edge",
    icon: (
      <Svg w={20} h={21}>
        <path
          d="M0 11C1 4 5 0 10.500 0 16 0 19.500 4 19.500 9v3H7c.5 3 3 4.500 6 4.500 2 0 4-.5 5.500-1.500v4c-2 1.200-4.500 1.800-7 1.800C6 20.800 2.500 17.500 2.500 13c0-3 1.500-5.500 4-7C3.500 6.500 1.500 8.500 0 11zM7.500 8.500h6.500c0-2.500-1.200-4-3.200-4S7.800 6 7.500 8.500z"
          fill="#1583dc"
          fillRule="evenodd"
          stroke="none"
        />
      </Svg>
    ),
  },
  {
    name: "File Explorer",
    icon: (
      <Svg w={20} h={18}>
        <path d="M0 1h7l1.500 2H20v14H0z" fill="#f2cf72" stroke="none" />
        <path d="M0 5h20v12H0z" fill="#fbe29a" stroke="none" />
        <path d="M4 18v-7h12v7h-3.500v-3.500h-5V18z" fill="#3fa9e0" stroke="none" />
      </Svg>
    ),
  },
  {
    name: "Store",
    icon: (
      <Svg w={22} h={22}>
        <path d="M7.500 7V3.500a3.500 3 0 0 1 7 0V7" stroke="#c9d1cb" strokeWidth="1.500" />
        <path d="M0 5h22v15q0 2-2 2H2q-2 0-2-2z" fill="#fff" stroke="none" />
        <path d="M6 8h4.500v4.500H6z" fill="#e8502a" stroke="none" />
        <path d="M11.500 8H16v4.500h-4.500z" fill="#7cb82f" stroke="none" />
        <path d="M6 13.500h4.500V18H6z" fill="#1b9de2" stroke="none" />
        <path d="M11.500 13.500H16V18h-4.500z" fill="#f8b617" stroke="none" />
      </Svg>
    ),
  },
  {
    name: "Chrome",
    icon: (
      <Svg w={20} h={20}>
        <circle cx="10" cy="10" r="10" fill="#f7c948" stroke="none" />
        <path d="M1.300 5A10 10 0 0 1 18.700 5L18 5.500H10L6 12.500z" fill="#d8483b" stroke="none" />
        <path d="M1.300 5A10 10 0 0 0 10 20l4-7.500-8 0z" fill="#3fa25a" stroke="none" />
        <path d="M18.700 5A10 10 0 0 1 10 20l4.500-8L13 5z" fill="#f7c948" stroke="none" />
        <circle cx="10" cy="10" r="4.200" fill="#4a86e8" stroke="#fff" strokeWidth="1.200" />
      </Svg>
    ),
  },
  {
    name: "Excel",
    active: true,
    icon: (
      <OfficeIcon color="#1f7145" letter="X">
        <path d="M12 3h8.500v15.500H12z" fill="#fff" stroke="none" />
        <path d="M12 6h8M12 9h8M12 12h8M12 15h8M16.500 3.500v15" stroke="#1f7145" />
      </OfficeIcon>
    ),
  },
  {
    name: "Word",
    icon: (
      <OfficeIcon color="#2b5797" letter="W">
        <path d="M12 3h8.500v15.500H12z" fill="#fff" stroke="none" />
        <path d="M12.500 6H19M12.500 8.500H19M12.500 11H19M12.500 13.500H19M12.500 16H19" stroke="#2b5797" />
      </OfficeIcon>
    ),
  },
  {
    name: "Access",
    icon: (
      <OfficeIcon color="#a4262f" letter="A">
        <path d="M12 4q5-2 9 0v14q-4 2-9 0z" fill="#fff" stroke="none" />
        <path d="M12 7.500q5 2 9 0M12 12q5 2 9 0M12 16q5 1 9-.500" stroke="#a4262f" />
      </OfficeIcon>
    ),
  },
  {
    name: "Windows tool",
    icon: (
      <Svg w={22} h={22}>
        <path d="M0 0h22v22H0z" fill="#4b4b4b" stroke="none" />
        <path d="M3 3h7.500v7.500H3z" fill="#f04e23" stroke="none" />
        <path d="M11.500 3H19v7.500h-7.500z" fill="#7fba00" stroke="none" />
        <path d="M3 11.500h7.500V19H3z" fill="#00a1f1" stroke="none" />
        <path d="M11.500 11.500H19V19h-7.500z" fill="#ffb900" stroke="none" />
      </Svg>
    ),
  },
  {
    name: "Recorder",
    icon: (
      <Svg w={22} h={22}>
        <path d="M0 0h22v22H0z" fill="#e8692c" stroke="none" />
        <path d="M4 8V4h4M14 4h4v4M18 14v4h-4M8 18H4v-4" stroke="#fbc9a8" strokeWidth="1.500" />
        <circle cx="11" cy="11" r="5.500" fill="#f3a06f" stroke="none" />
        <circle cx="11" cy="11" r="4" fill="#fff8e8" stroke="none" />
      </Svg>
    ),
  },
];

function Taskbar() {
  return (
    <footer className="flex h-[36px] shrink-0 items-stretch border-b border-black bg-[#082712] text-white">
      <button aria-label="Start" className="flex w-[40px] items-center pt-[2px] pl-[9px]">
        <svg width="16" height="16" viewBox="0 0 16 16" fill="#fff">
          <path d="M0 2.200 6.500 1.300v6.200H0zM7.500 1.200 16 0v7.500H7.500zM0 8.500h6.500v6.200L0 13.800zM7.500 8.500H16V16l-8.500-1.200z" />
        </svg>
      </button>
      <label className="flex w-[324px] items-center bg-[#344f34] pt-[2px] pr-[13px] pl-[8px]">
        <Svg w={20} h={20}>
          <circle cx="10" cy="10" r="8" strokeWidth="2.500" />
        </Svg>
        <input
          aria-label="Search"
          placeholder="Type here to search"
          className="min-w-0 flex-1 bg-transparent pl-[10px] text-[13px] outline-none placeholder:text-[#b3c1b1]"
        />
        <Svg w={12} h={16} className="text-[#b3c1b1]">
          <path d="M3.500.500h5v9h-5zM1 7v5.500h10V7M6 12.500v3" />
        </Svg>
      </label>
      <div className="flex pl-[2px]">
        {APPS.map((app) => (
          <button
            key={app.name}
            aria-label={app.name}
            className={clsx("flex w-[46px] items-center justify-center pt-[2px]", app.active && "bg-[#0d5117]")}
          >
            {app.icon}
          </button>
        ))}
      </div>
      <div className="ml-auto flex items-center pt-[2px]">
        <Svg w={14} h={15}>
          <circle cx="9.500" cy="3.500" r="2.700" />
          <circle cx="4" cy="7.500" r="2.500" />
          <path d="M.500 14c0-5 7-5 7 0M7.500 7.500c3-2 6 0 6 3" strokeWidth="1.200" />
        </Svg>
        <Svg w={12} h={7} className="ml-[21px]">
          <path d="M1 6l5-5 5 5" strokeWidth="1.300" />
        </Svg>
        <Svg w={12} h={13} className="ml-[12px]">
          <path d="M1 12A11 11 0 0 1 12 1.500" stroke="#8b9a8e" />
          <path d="M4 12a8 8 0 0 1 8-7.500M7 12a5 5 0 0 1 5-4.500" strokeWidth="1.300" />
          <path d="M9 13a3 3 0 0 1 3-3v3z" fill="#fff" stroke="none" />
        </Svg>
        <Svg w={16} h={14} className="ml-[7px]">
          <path d="M.500 4.500h3l3-3v11l-3-3h-3zM8.500 5q1.500 2 0 4M11 3.500q3 3.500 0 7M13 1.500q4 5.500 0 11" />
        </Svg>
        <div className="ml-[8px] w-[52px] text-center text-[11px] leading-[16px] whitespace-nowrap">
          <p>12:15 AM</p>
          <p>7/9/2018</p>
        </div>
        <button aria-label="4 new notifications" className="mr-[13px] ml-[16px]">
          <Svg w={23} h={24}>
            <path d="M0 1h15v13H7l-3 3v-3H0z" fill="#fff" stroke="none" />
            <path d="M3 4.500h9M3 7.500h9M3 10.500h5" stroke="#1d3b26" />
            <circle cx="15" cy="16" r="7" fill="#14562b" stroke="#a3b8a8" />
            <text x="15" y="20" textAnchor="middle" fontSize="11" fontWeight="bold" fill="#fff" stroke="none">
              4
            </text>
          </Svg>
        </button>
      </div>
    </footer>
  );
}

export default function App() {
  return (
    <div className="flex h-screen flex-col overflow-hidden bg-[#e6e6e6] font-['Open_Sans',sans-serif] text-[11px]">
      <div className="shrink-0 border-r-4 border-[#1d4a7c]">
        <TitleBar />
        <TabStrip />
      </div>
      <Ribbon />
      <FormulaBar />
      <Sheet />
      <SheetTabs />
      <StatusBar />
      <Taskbar />
    </div>
  );
}
